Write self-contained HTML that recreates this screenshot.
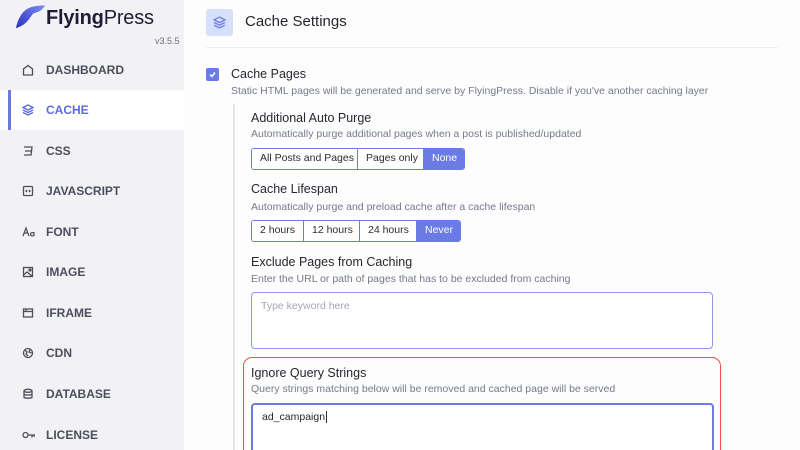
<!DOCTYPE html>
<html style="width:800px;height:450px;overflow:hidden"><head><meta charset="utf-8"><style>
*{box-sizing:border-box;margin:0;padding:0}
body{width:800px;height:450px;overflow:hidden;font-family:"Liberation Sans",sans-serif;background:#fdfdfd;position:relative}
.side{position:absolute;left:0;top:0;width:184px;height:450px;background:#f2f1f5}
.logo{position:absolute;left:15px;top:5px}
.brand{position:absolute;left:46px;top:7px;font-size:20px;color:#1d1d35;letter-spacing:-0.2px}
.brand b{font-weight:bold}
.ver{position:absolute;left:155px;top:36px;font-size:9px;color:#6b6f7b}
.nav{position:absolute;left:0;width:184px;height:40px;display:flex;align-items:center;font-size:12px;font-weight:bold;color:#4b4f5c}
.nav svg{position:absolute;left:22px}
.nav span{position:absolute;left:46px}
.nav.act{background:#fff;color:#5b6ae0}
.nav.act:before{content:"";position:absolute;left:8px;top:0;width:3px;height:40px;background:#6a7be6}
.t{position:absolute;white-space:nowrap}
.h{font-size:12.5px;color:#25272e}
.d{font-size:10.5px;color:#747a8c}
.grp{position:absolute;display:flex;border:1.5px solid #6a7be6;border-radius:3px;height:22px;overflow:hidden}
.grp div{font-size:10.5px;color:#2a2c33;padding:0 8px;line-height:19px;border-right:1.5px solid #6a7be6;background:#fff;white-space:nowrap;text-align:center;flex:none}
.grp div:last-child{border-right:none}
.grp .on{background:#6a7be6;color:#fff}
.ta{position:absolute;border:1.5px solid #8c99ec;border-radius:4px;background:#fff;font-size:10.5px}
</style></head><body>
<div class="side">
<svg class="logo" width="30" height="24" viewBox="0 0 30 24"><defs><linearGradient id="g" x1="0" y1="1" x2="1" y2="0"><stop offset="0" stop-color="#2b2fbf"/><stop offset="1" stop-color="#7a8cf5"/></linearGradient></defs><path d="M1 23 C3 14 7 6 14 3 C18 1 24 0.5 30 0.5 C28 4 25 6.5 21 7.5 C19 8 18 8.5 17 10 C14 14 12 18 6 21 C4 22 2 23 1 23 Z" fill="url(#g)"/></svg>
<div class="brand"><b>Flying</b>Press</div>
<div class="ver">v3.5.5</div>
<div class="nav" style="top:50px"><svg width="12" height="12" viewBox="0 0 12 12" fill="none" stroke="#4b4f5c" stroke-width="1.3"><path d="M1.5 11V5L6 1.5 10.5 5V11Z"/></svg><span>DASHBOARD</span></div>
<div class="nav act" style="top:90px"><svg width="12" height="12" viewBox="0 0 12 12" fill="none" stroke="#5b6ae0" stroke-width="1.3"><path d="M6 1 11 3.5 6 6 1 3.5Z M1 6 6 8.5 11 6 M1 8.5 6 11 11 8.5"/></svg><span>CACHE</span></div>
<div class="nav" style="top:131px"><svg width="12" height="12" viewBox="0 0 12 12" fill="none" stroke="#4b4f5c" stroke-width="1.3"><path d="M2 2H10L9 10H2M3 6H9"/></svg><span>CSS</span></div>
<div class="nav" style="top:171px"><svg width="12" height="12" viewBox="0 0 12 12" fill="none" stroke="#4b4f5c" stroke-width="1.3"><rect x="1.5" y="1.5" width="9" height="9" rx="1"/><path d="M5 5 4 6 5 7M7 5 8 6 7 7"/></svg><span>JAVASCRIPT</span></div>
<div class="nav" style="top:212px"><svg width="14" height="12" viewBox="0 0 14 12" fill="none" stroke="#4b4f5c" stroke-width="1.2"><path d="M1 10 4 2 7 10M2.2 7H5.8M12 6V10M12 7.5C11 6 8.5 6.5 8.5 8.3S11 10.5 12 9"/></svg><span>FONT</span></div>
<div class="nav" style="top:252px"><svg width="12" height="12" viewBox="0 0 12 12" fill="none" stroke="#4b4f5c" stroke-width="1.3"><rect x="1.5" y="1.5" width="9" height="9"/><path d="M1.5 9 5 6 10.5 10.5"/><circle cx="8" cy="4" r="1"/></svg><span>IMAGE</span></div>
<div class="nav" style="top:293px"><svg width="12" height="12" viewBox="0 0 12 12" fill="none" stroke="#4b4f5c" stroke-width="1.3"><rect x="1.5" y="2" width="9" height="8"/><path d="M1.5 4.5H10.5M4 2V4.5"/></svg><span>IFRAME</span></div>
<div class="nav" style="top:333px"><svg width="12" height="12" viewBox="0 0 12 12" fill="none" stroke="#4b4f5c" stroke-width="1.3"><circle cx="6" cy="6" r="4.5"/><path d="M3 3 5 5 4 7 6 9M8 2.5 7 5 9.5 6"/></svg><span>CDN</span></div>
<div class="nav" style="top:374px"><svg width="12" height="12" viewBox="0 0 12 12" fill="none" stroke="#4b4f5c" stroke-width="1.3"><ellipse cx="6" cy="2.8" rx="4" ry="1.5"/><path d="M2 2.8V9.2C2 10.5 10 10.5 10 9.2V2.8M2 6C2 7.3 10 7.3 10 6"/></svg><span>DATABASE</span></div>
<div class="nav" style="top:415px"><svg width="14" height="12" viewBox="0 0 14 12" fill="none" stroke="#4b4f5c" stroke-width="1.3"><circle cx="3.5" cy="6" r="2.5"/><path d="M6 6H13M10 6V8.5M12 6V8"/></svg><span>LICENSE</span></div>
</div>

<div style="position:absolute;left:206px;top:9px;width:27px;height:27px;background:#d6e0fb;border-radius:3px"></div>
<svg style="position:absolute;left:213px;top:16px" width="13" height="13" viewBox="0 0 12 12" fill="none" stroke="#6a7be6" stroke-width="1.2"><path d="M6 1 11 3.5 6 6 1 3.5Z M1 6 6 8.5 11 6 M1 8.5 6 11 11 8.5"/></svg>
<div class="t" style="left:245px;top:13px;font-size:15px;color:#25272e">Cache Settings</div>
<div style="position:absolute;left:206px;top:47px;width:572px;height:1px;background:#eceef3"></div>

<div style="position:absolute;left:206px;top:68px;width:13px;height:13px;background:#6a7be6;border-radius:2px"></div>
<svg style="position:absolute;left:208px;top:70px" width="9" height="9" viewBox="0 0 9 9" fill="none" stroke="#fff" stroke-width="1.5"><path d="M2 4.5 4 6.5 7 2.5"/></svg>
<div class="t h" style="left:231px;top:67px">Cache Pages</div>
<div class="t d" style="left:231px;top:85px">Static HTML pages will be generated and serve by FlyingPress. Disable if you've another caching layer</div>
<div style="position:absolute;left:233px;top:104px;width:1.5px;height:346px;background:#e3e5ec"></div>

<div class="t h" style="left:251px;top:111px">Additional Auto Purge</div>
<div class="t d" style="left:251px;top:128px">Automatically purge additional pages when a post is published/updated</div>
<div class="grp" style="left:251px;top:148px;width:214px"><div style="width:106px">All Posts and Pages</div><div style="width:66px">Pages only</div><div class="on" style="flex:1">None</div></div>

<div class="t h" style="left:251px;top:182px">Cache Lifespan</div>
<div class="t d" style="left:251px;top:201px">Automatically purge and preload cache after a cache lifespan</div>
<div class="grp" style="left:251px;top:220px;width:210px"><div style="width:52px">2 hours</div><div style="width:56px">12 hours</div><div style="width:57px">24 hours</div><div class="on" style="flex:1">Never</div></div>

<div class="t h" style="left:251px;top:255px">Exclude Pages from Caching</div>
<div class="t d" style="left:251px;top:273px">Enter the URL or path of pages that has to be excluded from caching</div>
<div class="ta" style="left:251px;top:292px;width:462px;height:57px;color:#a4a8b5;padding:7px 9px">Type keyword here</div>

<div style="position:absolute;left:243px;top:357px;width:478px;height:110px;border:1.5px solid #ee5440;border-radius:9px"></div>
<div class="t h" style="left:251px;top:366px">Ignore Query Strings</div>
<div class="t d" style="left:251px;top:383px">Query strings matching below will be removed and cached page will be served</div>
<div class="ta" style="left:251px;top:403px;width:463px;height:60px;border:2px solid #6a7be6;color:#25272e;padding:6px 9px">ad_campaign<span style="border-left:1px solid #333;margin-left:1px"></span></div>
</body></html>
